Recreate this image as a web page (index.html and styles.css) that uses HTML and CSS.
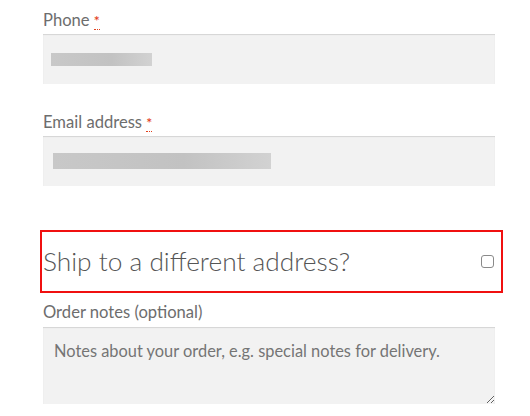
FILE: index.html
```html
<!DOCTYPE html>
<html lang="en">
<head>
<meta charset="utf-8">
<title>Checkout</title>
<link rel="stylesheet" href="styles.css">
</head>
<body>
<form class="checkout">
  <div class="field">
    <label class="label">Phone&nbsp;<abbr class="required" title="required">*</abbr></label>
    <div class="input"><span class="redacted redacted-phone"></span></div>
  </div>
  <div class="field">
    <label class="label">Email address&nbsp;<abbr class="required" title="required">*</abbr></label>
    <div class="input"><span class="redacted redacted-email"></span></div>
  </div>
  <h3 class="ship">
    <span class="ship-text">Ship to a different address?</span>
    <input class="ship-check" type="checkbox" aria-label="Ship to a different address?">
  </h3>
  <div class="field notes">
    <label class="label">Order notes (optional)</label>
    <textarea class="textarea" placeholder="Notes about your order, e.g. special notes for delivery."></textarea>
  </div>
</form>
</body>
</html>
```
FILE: styles.css
```css
html, body {
  margin: 0;
  padding: 0;
  background: #ffffff;
}
body {
  font-family: Lato, "Liberation Sans", sans-serif;
  color: #6d6d6d;
}
.checkout {
  width: 452px;
  margin: 0 0 0 43px;
  padding-top: 8px;
}
.field {
  margin: 0 0 26px 0;
}
.label {
  display: block;
  font-size: 16.6px;
  line-height: 24px;
  color: #6d6d6d;
  margin-bottom: 2px;
}
.required {
  color: #e2401c;
  text-decoration: none;
  border-bottom: 1px dotted #e2401c;
  font-weight: 600;
  font-size: 14px;
  line-height: 1;
}
.input {
  height: 50px;
  background: #f2f2f2;
  box-shadow: inset 0 1px 1px rgba(0, 0, 0, 0.125);
  box-sizing: border-box;
  display: flex;
  align-items: center;
  padding-left: 8px;
}
.redacted {
  display: block;
  height: 13px;
  background: linear-gradient(90deg, #c8c8c8 0%, #c2c2c2 60%, #d2d2d2 100%);
}
.redacted-phone {
  width: 101px;
}
.redacted-email {
  width: 218px;
  height: 16px;
  margin-left: 2px;
}
.ship {
  margin: 44px -8px 0 -3px;
  height: 63px;
  box-sizing: border-box;
  border: 2px solid #f01010;
  padding: 0 7px 0 1px;
  display: flex;
  align-items: center;
  justify-content: space-between;
  font-weight: 300;
}
.ship-text {
  font-size: 26.3px;
  line-height: 1;
  color: #555555;
  font-weight: 300;
}
.ship-check {
  appearance: none;
  -webkit-appearance: none;
  margin: 0;
  width: 13px;
  height: 13px;
  border: 1px solid #8a8a8a;
  border-radius: 3px;
  box-sizing: border-box;
  background: #ffffff;
}
.notes {
  margin-top: 7px;
}
.notes .label {
  margin-bottom: 3px;
}
.textarea {
  display: block;
  width: 452px;
  height: 77px;
  box-sizing: border-box;
  border: 0;
  margin: 0;
  background: #f2f2f2;
  box-shadow: inset 0 1px 1px rgba(0, 0, 0, 0.125);
  padding: 12px 11px;
  font-family: Lato, "Liberation Sans", sans-serif;
  font-size: 16.4px;
  line-height: 24px;
  color: #6d6d6d;
  outline: none;
}
.textarea::placeholder {
  color: #757575;
}
```
